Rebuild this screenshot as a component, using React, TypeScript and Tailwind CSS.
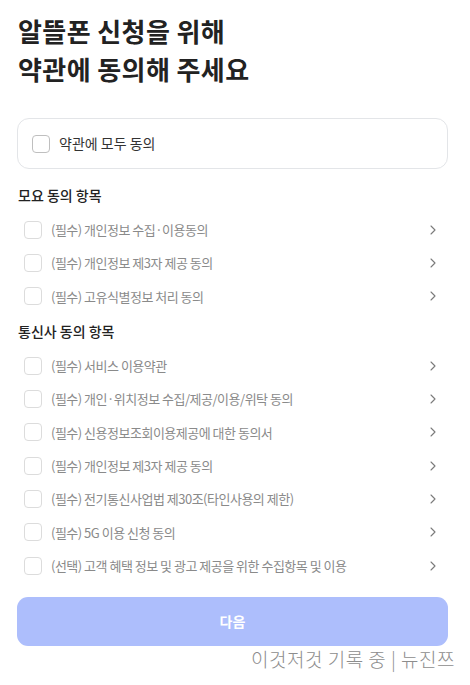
import { ChevronRight } from 'lucide-react'

const required = [
  '(필수) 개인정보 수집·이용동의',
  '(필수) 개인정보 제3자 제공 동의',
  '(필수) 고유식별정보 처리 동의',
]

const carrier = [
  '(필수) 서비스 이용약관',
  '(필수) 개인·위치정보 수집/제공/이용/위탁 동의',
  '(필수) 신용정보조회이용제공에 대한 동의서',
  '(필수) 개인정보 제3자 제공 동의',
  '(필수) 전기통신사업법 제30조(타인사용의 제한)',
  '(필수) 5G 이용 신청 동의',
  '(선택) 고객 혜택 정보 및 광고 제공을 위한 수집항목 및 이용',
]

function Item({ label }: { label: string }) {
  return (
    <div className="flex h-[33.33px] items-center pl-[7px] pr-[7px]">
      <span className="h-[18px] w-[18px] shrink-0 rounded-[4px] border border-[#dcdcdc] bg-white" />
      <span className="ml-[9px] flex-1 text-[13px] tracking-[-0.5px] text-[#8a8a8a]">{label}</span>
      <ChevronRight size={16} strokeWidth={1.6} className="text-[#7a7a7a]" />
    </div>
  )
}

export default function App() {
  return (
    <div className="min-h-[685px] bg-white font-['Noto_Sans_CJK_KR',sans-serif]">
      <div className="ml-[17px] w-[431px] pt-3">
        <h1 className="pl-[1px] text-[26px] font-bold leading-[38px] tracking-[0.4px] text-[#222]">
          알뜰폰 신청을 위해
          <br />
          약관에 동의해 주세요
        </h1>

        <div className="mt-[30px] flex h-[51px] items-center rounded-[12px] border border-[#e3e5e8] pl-[14px]">
          <span className="h-[18px] w-[18px] rounded-[4px] border border-[#bfbfbf] bg-white" />
          <span className="ml-[9px] text-[14px] text-[#333]">약관에 모두 동의</span>
        </div>

        <h2 className="mt-4 mb-2 pl-[1px] text-[14px] font-medium leading-[20px] text-[#222]">모요 동의 항목</h2>
        {required.map((l, i) => <Item key={i} label={l} />)}

        <h2 className="mt-2 mb-2 pl-[1px] text-[14px] font-medium leading-[20px] text-[#222]">통신사 동의 항목</h2>
        {carrier.map((l, i) => <Item key={i} label={l} />)}

        <button className="mt-[15px] flex h-[49px] w-full items-center justify-center rounded-[11px] bg-[#adbefc] text-[14px] font-bold text-white">
          다음
        </button>
        <div className="-mr-[7px] text-right text-[19px] font-light leading-[26px] tracking-[0.5px] text-[#8d8d8d]">
          이것저것 기록 중 | 뉴진쯔
        </div>
      </div>
    </div>
  )
}
